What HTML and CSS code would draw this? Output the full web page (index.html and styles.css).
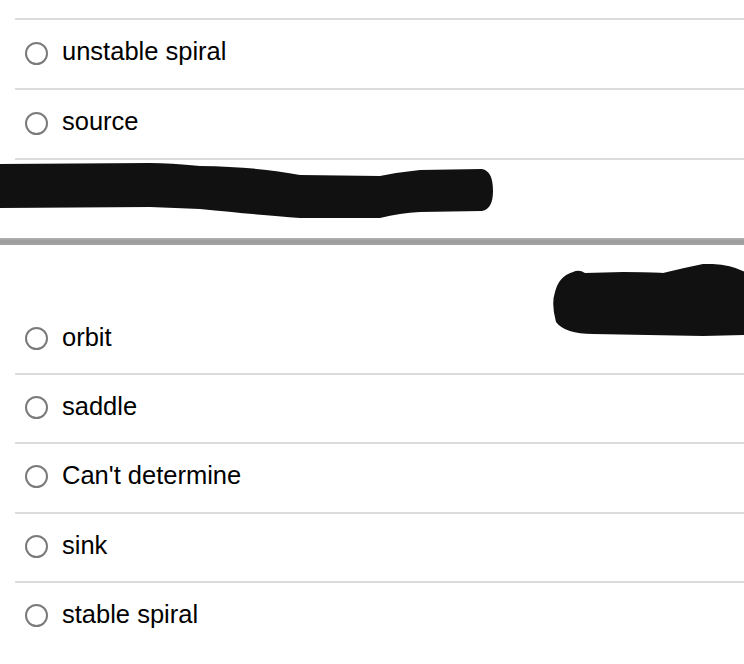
FILE: index.html
```html
<!DOCTYPE html>
<html lang="en">
<head>
<meta charset="utf-8">
<title>Question options</title>
<link rel="stylesheet" href="styles.css">
</head>
<body>
<div class="page">
  <section class="question question-top">
    <ul class="options">
      <li class="option"><span class="radio"></span><span class="label">unstable spiral</span></li>
      <li class="option"><span class="radio"></span><span class="label">source</span></li>
      <li class="option option-feedback"></li>
    </ul>
  </section>
  <hr class="divider">
  <section class="question question-bottom">
    <div class="q-head"></div>
    <ul class="options">
      <li class="option first"><span class="radio"></span><span class="label">orbit</span></li>
      <li class="option"><span class="radio"></span><span class="label">saddle</span></li>
      <li class="option"><span class="radio"></span><span class="label">Can't determine</span></li>
      <li class="option"><span class="radio"></span><span class="label">sink</span></li>
      <li class="option"><span class="radio"></span><span class="label">stable spiral</span></li>
    </ul>
  </section>
  <svg class="redact redact-a" width="500" height="60" viewBox="0 0 500 60" aria-hidden="true">
    <path d="M0 1 L150 0 Q170 0 200 3 Q260 4 300 12 L380 13 Q400 9 420 7 L482 6 Q493 8 493 28 Q493 46 482 48 L420 49 Q400 50 380 55 L300 55 Q260 52 200 46 L150 44 L0 45 Z" fill="#111"/>
  </svg>
  <svg class="redact redact-b" width="192" height="75" viewBox="0 0 192 75" aria-hidden="true">
    <path d="M20 8 Q26 5 32 9 L70 8 Q100 8 110 9 Q130 4 150 0 Q175 -1 192 8 L192 71 L150 72 L40 70 Q12 70 3 58 Q-2 40 2 28 Q6 12 20 8 Z" fill="#111"/>
  </svg>
</div>
</body>
</html>
```

FILE: styles.css
```css
* {
  box-sizing: border-box;
}

html, body {
  margin: 0;
  padding: 0;
  background: #ffffff;
}

body {
  font-family: "Liberation Sans", Arial, sans-serif;
  font-size: 25.5px;
  color: #000000;
}

.page {
  position: relative;
  width: 744px;
  height: 664px;
  overflow: hidden;
}

.question-top {
  padding-top: 18px;
}

.options {
  list-style: none;
  margin: 0;
  padding: 0;
}

.option {
  display: flex;
  align-items: center;
  gap: 14px;
  height: 70px;
  margin-left: 15px;
  padding-left: 10px;
  border-top: 2px solid #dcdcdc;
}

.question-bottom .option {
  height: 69.5px;
}

.option-feedback {
  height: 80px;
}

.radio {
  flex: none;
  width: 23px;
  height: 23px;
  border: 2px solid #7a7a7a;
  border-radius: 50%;
  margin-bottom: 2px;
  background: #ffffff;
}

.label {
  line-height: 1;
  margin-bottom: 4px;
}

.divider {
  margin: 0;
  height: 7px;
  border: none;
  background: linear-gradient(#b4b4b4, #9c9c9c 40%, #a2a2a2);
}

.q-head {
  height: 58px;
}

.question-bottom .option.first {
  border-top-color: transparent;
  padding-top: 2px;
}

.redact {
  position: absolute;
  display: block;
}

.redact-a {
  left: 0;
  top: 163px;
}

.redact-b {
  left: 553px;
  top: 264px;
}
```
